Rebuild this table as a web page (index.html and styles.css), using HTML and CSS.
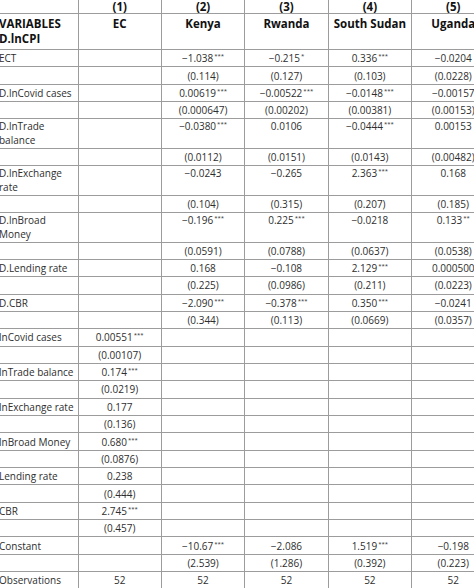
FILE: index.html
```html
<!DOCTYPE html>
<html>
<head>
<meta charset="utf-8">
<link rel="stylesheet" href="styles.css">
</head>
<body>
<table class="reg">
<colgroup>
<col class="c-lab"><col class="c-num"><col class="c-num"><col class="c-num"><col class="c-num"><col class="c-num">
</colgroup>
<tr class="h1"><th></th><th>(1)</th><th>(2)</th><th>(3)</th><th>(4)</th><th>(5)</th></tr>
<tr class="h2"><th class="lab">VARIABLES<br>D.lnCPI</th><th>EC</th><th>Kenya</th><th>Rwanda</th><th>South Sudan</th><th>Uganda</th></tr>
<tr class="s"><td class="lab">ECT</td><td></td><td>−1.038<sup>***</sup></td><td>−0.215<sup>*</sup></td><td>0.336<sup>***</sup></td><td>−0.0204</td></tr>
<tr class="s"><td class="lab"></td><td></td><td>(0.114)</td><td>(0.127)</td><td>(0.103)</td><td>(0.0228)</td></tr>
<tr class="s"><td class="lab">D.lnCovid cases</td><td></td><td>0.00619<sup>***</sup></td><td>−0.00522<sup>***</sup></td><td>−0.0148<sup>***</sup></td><td>−0.00157</td></tr>
<tr class="s"><td class="lab"></td><td></td><td>(0.000647)</td><td>(0.00202)</td><td>(0.00381)</td><td>(0.00153)</td></tr>
<tr class="d"><td class="lab">D.lnTrade<br>balance</td><td></td><td>−0.0380<sup>***</sup></td><td>0.0106</td><td>−0.0444<sup>***</sup></td><td>0.00153</td></tr>
<tr class="s"><td class="lab"></td><td></td><td>(0.0112)</td><td>(0.0151)</td><td>(0.0143)</td><td>(0.00482)</td></tr>
<tr class="d"><td class="lab">D.lnExchange<br>rate</td><td></td><td>−0.0243</td><td>−0.265</td><td>2.363<sup>***</sup></td><td>0.168</td></tr>
<tr class="s"><td class="lab"></td><td></td><td>(0.104)</td><td>(0.315)</td><td>(0.207)</td><td>(0.185)</td></tr>
<tr class="d"><td class="lab">D.lnBroad<br>Money</td><td></td><td>−0.196<sup>***</sup></td><td>0.225<sup>***</sup></td><td>−0.0218</td><td>0.133<sup>**</sup></td></tr>
<tr class="s"><td class="lab"></td><td></td><td>(0.0591)</td><td>(0.0788)</td><td>(0.0637)</td><td>(0.0538)</td></tr>
<tr class="s"><td class="lab">D.Lending rate</td><td></td><td>0.168</td><td>−0.108</td><td>2.129<sup>***</sup></td><td>0.000500</td></tr>
<tr class="s"><td class="lab"></td><td></td><td>(0.225)</td><td>(0.0986)</td><td>(0.211)</td><td>(0.0223)</td></tr>
<tr class="s"><td class="lab">D.CBR</td><td></td><td>−2.090<sup>***</sup></td><td>−0.378<sup>***</sup></td><td>0.350<sup>***</sup></td><td>−0.0241</td></tr>
<tr class="s"><td class="lab"></td><td></td><td>(0.344)</td><td>(0.113)</td><td>(0.0669)</td><td>(0.0357)</td></tr>
<tr class="s"><td class="lab">lnCovid cases</td><td>0.00551<sup>***</sup></td><td></td><td></td><td></td><td></td></tr>
<tr class="s"><td class="lab"></td><td>(0.00107)</td><td></td><td></td><td></td><td></td></tr>
<tr class="s"><td class="lab">lnTrade balance</td><td>0.174<sup>***</sup></td><td></td><td></td><td></td><td></td></tr>
<tr class="s"><td class="lab"></td><td>(0.0219)</td><td></td><td></td><td></td><td></td></tr>
<tr class="s"><td class="lab">lnExchange rate</td><td>0.177</td><td></td><td></td><td></td><td></td></tr>
<tr class="s"><td class="lab"></td><td>(0.136)</td><td></td><td></td><td></td><td></td></tr>
<tr class="s"><td class="lab">lnBroad Money</td><td>0.680<sup>***</sup></td><td></td><td></td><td></td><td></td></tr>
<tr class="s"><td class="lab"></td><td>(0.0876)</td><td></td><td></td><td></td><td></td></tr>
<tr class="s"><td class="lab">Lending rate</td><td>0.238</td><td></td><td></td><td></td><td></td></tr>
<tr class="s"><td class="lab"></td><td>(0.444)</td><td></td><td></td><td></td><td></td></tr>
<tr class="s"><td class="lab">CBR</td><td>2.745<sup>***</sup></td><td></td><td></td><td></td><td></td></tr>
<tr class="s"><td class="lab"></td><td>(0.457)</td><td></td><td></td><td></td><td></td></tr>
<tr class="s"><td class="lab">Constant</td><td></td><td>−10.67<sup>***</sup></td><td>−2.086</td><td>1.519<sup>***</sup></td><td>−0.198</td></tr>
<tr class="s"><td class="lab"></td><td></td><td>(2.539)</td><td>(1.286)</td><td>(0.392)</td><td>(0.223)</td></tr>
<tr class="s"><td class="lab">Observations</td><td>52</td><td>52</td><td>52</td><td>52</td><td>52</td></tr>
</table>
</body>
</html>
```
FILE: styles.css
```css
html, body {
  margin: 0;
  padding: 0;
  background: #ffffff;
  overflow: hidden;
}
body {
  width: 474px;
  height: 588px;
}
.reg {
  border-collapse: collapse;
  table-layout: fixed;
  width: 498px;
  margin-left: -3px;
  margin-top: -1px;
  font-family: "Open Sans", "Noto Sans", sans-serif;
  font-size: 10px;
  color: #2e2e2e;
}
.c-lab { width: 81px; }
.c-num { width: 83.4px; }
.reg th, .reg td {
  border: 1px solid #9c9c9c;
  padding: 0 1px;
  text-align: center;
  white-space: nowrap;
  overflow: hidden;
}
.reg tr > :first-child {
  border-left: none;
}
.reg tr.h1 > * {
  border-top: none;
  height: 14px;
  font-weight: bold;
  font-size: 11.5px;
  color: #111111;
  vertical-align: middle;
  line-height: 13px;
}
.reg tr.h2 > * {
  height: 33px;
  vertical-align: top;
  padding-top: 2px;
  font-weight: bold;
  font-size: 11.5px;
  color: #111111;
  line-height: 15px;
}
.reg tr.s > * {
  height: 16.35px;
  line-height: 14px;
  vertical-align: middle;
}
.reg tr.d > * {
  height: 28.5px;
  line-height: 14px;
  vertical-align: top;
}
.reg .lab {
  text-align: left;
  padding-left: 2px;
}
.reg sup {
  font-size: 6px;
  vertical-align: 4px;
  line-height: 0;
  margin-left: 1px;
}
```
